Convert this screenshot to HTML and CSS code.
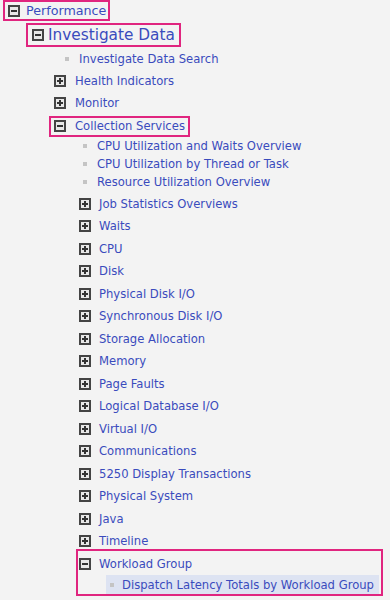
FILE: index.html
```html
<!DOCTYPE html>
<html lang="en">
<head>
    <meta charset="UTF-8">
    <meta name="viewport" content="width=device-width, initial-scale=1.0">
    <title>Performance - Navigation</title>
    <link rel="stylesheet" href="styles.css">
</head>
<body>
    <div class="tree">
        <!-- top level -->
        <div class="node top boxed"><span class="tog open"></span><a href="#" class="label">Performance</a></div>
        <div class="node section boxed"><span class="tog open"></span><a href="#" class="label">Investigate Data</a></div>
        <div class="leaf lv1"><span class="dot"></span><a href="#" class="label">Investigate Data Search</a></div>

        <!-- investigate data children -->
        <div class="node lv2 first"><span class="tog"></span><a href="#" class="label">Health Indicators</a></div>
        <div class="node lv2"><span class="tog"></span><a href="#" class="label">Monitor</a></div>
        <div class="node lv2 boxed collection"><span class="tog open"></span><a href="#" class="label">Collection Services</a></div>

        <!-- collection services -->
        <div class="leaf lv2"><span class="dot"></span><a href="#" class="label">CPU Utilization and Waits Overview</a></div>
        <div class="leaf lv2"><span class="dot"></span><a href="#" class="label">CPU Utilization by Thread or Task</a></div>
        <div class="leaf lv2"><span class="dot"></span><a href="#" class="label">Resource Utilization Overview</a></div>

        <div class="node lv3 first"><span class="tog"></span><a href="#" class="label">Job Statistics Overviews</a></div>
        <div class="node lv3"><span class="tog"></span><a href="#" class="label">Waits</a></div>
        <div class="node lv3"><span class="tog"></span><a href="#" class="label">CPU</a></div>
        <div class="node lv3"><span class="tog"></span><a href="#" class="label">Disk</a></div>
        <div class="node lv3"><span class="tog"></span><a href="#" class="label">Physical Disk I/O</a></div>
        <div class="node lv3"><span class="tog"></span><a href="#" class="label">Synchronous Disk I/O</a></div>
        <div class="node lv3"><span class="tog"></span><a href="#" class="label">Storage Allocation</a></div>
        <div class="node lv3"><span class="tog"></span><a href="#" class="label">Memory</a></div>
        <div class="node lv3"><span class="tog"></span><a href="#" class="label">Page Faults</a></div>
        <div class="node lv3"><span class="tog"></span><a href="#" class="label">Logical Database I/O</a></div>
        <div class="node lv3"><span class="tog"></span><a href="#" class="label">Virtual I/O</a></div>
        <div class="node lv3"><span class="tog"></span><a href="#" class="label">Communications</a></div>
        <div class="node lv3"><span class="tog"></span><a href="#" class="label">5250 Display Transactions</a></div>
        <div class="node lv3"><span class="tog"></span><a href="#" class="label">Physical System</a></div>
        <div class="node lv3"><span class="tog"></span><a href="#" class="label">Java</a></div>
        <div class="node lv3"><span class="tog"></span><a href="#" class="label">Timeline</a></div>

        <!-- highlighted group -->
        <div class="group boxed">
            <div class="node lv3"><span class="tog open"></span><a href="#" class="label">Workload Group</a></div>
            <div class="leaf lv3 selected"><span class="dot"></span><a href="#" class="label">Dispatch Latency Totals by Workload Group</a></div>
        </div>
    </div>
</body>
</html>
```

FILE: styles.css
```css
* {
    margin: 0;
    padding: 0;
    box-sizing: border-box;
}

body {
    background: #f3f3f3;
    font-family: "DejaVu Sans", Verdana, sans-serif;
    font-size: 11.6px;
    color: #3a4bbd;
}

.tree {
    display: flex;
    flex-direction: column;
    align-items: flex-start;
}

.label {
    color: #3a4bbd;
    text-decoration: none;
    white-space: nowrap;
}

/* rows */
.node {
    display: flex;
    align-items: center;
    height: 22.5px;
    padding-top: 1px;
}

.leaf {
    display: flex;
    align-items: center;
    height: 18px;
    padding-top: 1px;
}

.boxed {
    border: 2px solid #e0257f;
}

/* expand / collapse toggle */
.tog {
    width: 12px;
    height: 12px;
    flex-shrink: 0;
    border: 2px solid #444;
    background:
        linear-gradient(#333, #333) center / 6px 2px no-repeat,
        linear-gradient(#333, #333) center / 2px 6px no-repeat,
        #e8e8e8;
}

.tog.open {
    background:
        linear-gradient(#333, #333) center / 6px 2px no-repeat,
        #e8e8e8;
}

.dot {
    width: 4px;
    height: 4px;
    flex-shrink: 0;
    background: #c4c4c4;
}

/* levels */
.node.top {
    height: 21px;
    margin-left: 3px;
    padding: 0 2px 0 3px;
    font-size: 12.7px;
}

.top .tog {
    margin-right: 6px;
}

.node.section {
    height: 24px;
    margin: 2px 0 0 26px;
    padding: 0 4px 0 4px;
    font-size: 15.3px;
}

.section .tog {
    margin-right: 4px;
}

.leaf.lv1 {
    margin: 2px 0 0 65px;
}

.leaf.lv1 .dot {
    margin-right: 10px;
}

.node.lv2 {
    margin-left: 54px;
}

.node.lv2 .tog {
    margin-right: 9px;
}

.node.lv2.first {
    margin-top: 2px;
}

.node.collection {
    height: 21px;
    margin: 1.5px 0 0 49px;
    padding: 0 3px 0 3px;
}

.leaf.lv2 {
    margin-left: 83px;
}

.leaf.lv2 .dot {
    margin-right: 10px;
}

.node.lv3 {
    margin-left: 79px;
}

.node.lv3 .tog {
    margin-right: 8px;
}

.node.lv3.first {
    margin-top: 1.5px;
}

.group {
    width: 307px;
    margin: -3px 0 0 76px;
    padding: 1.5px 1px 0 1px;
}

.group .node.lv3 {
    margin-left: 0;
}

.leaf.lv3 {
    height: 19px;
    margin: 0 1px 0 27px;
    padding-left: 4px;
}

.leaf.lv3 .dot {
    margin-right: 8px;
}

.selected {
    background: #dde3f2;
}
```
